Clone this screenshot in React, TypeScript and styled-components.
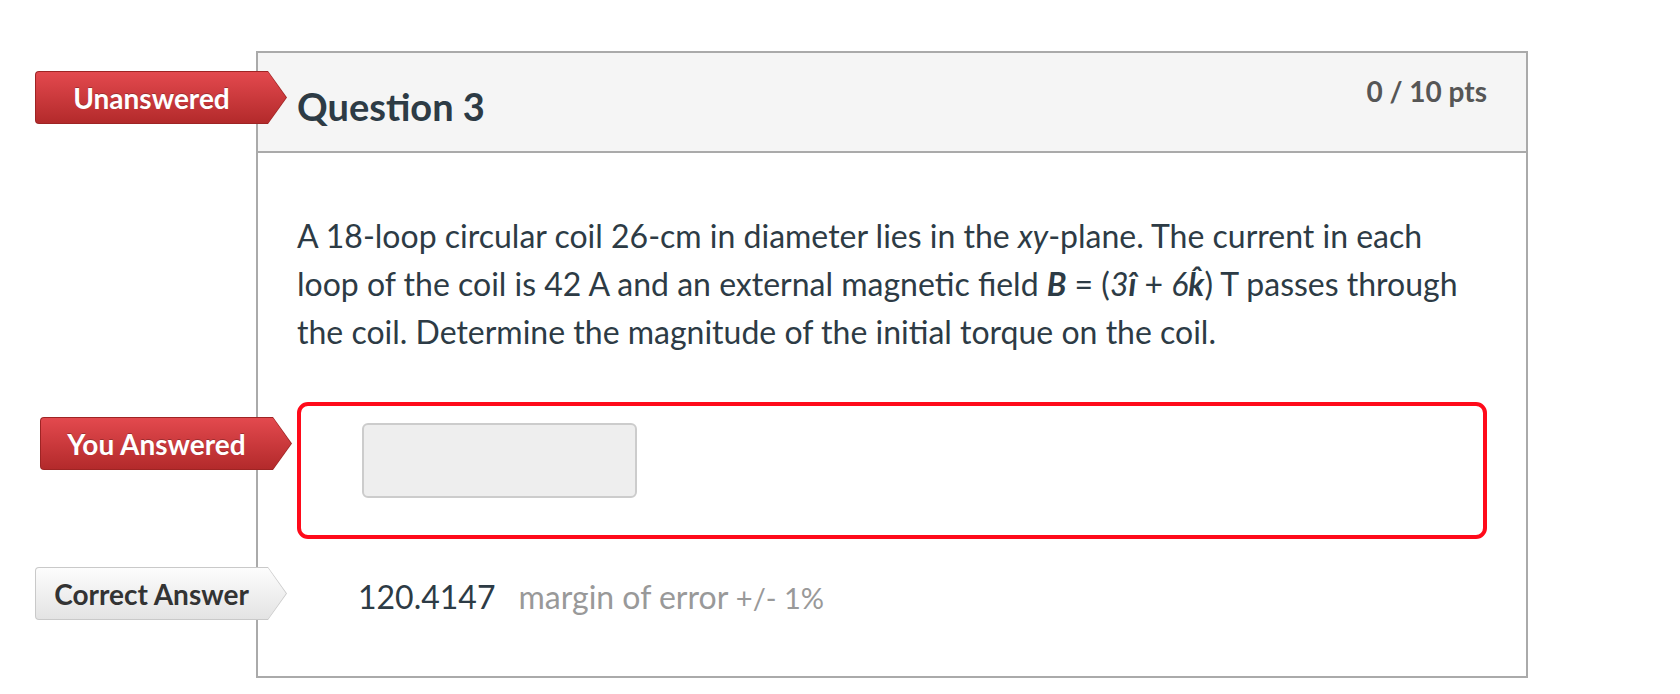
import React from 'react';
import styled, { createGlobalStyle, css } from 'styled-components';

const GlobalStyle = createGlobalStyle`
  html, body {
    margin: 0;
    padding: 0;
    background: #fff;
  }
  body {
    font-family: Lato, "Noto Sans", "Liberation Sans", sans-serif;
    color: #2d3b45;
  }
`;

const Page = styled.div`
  padding: 51px 0 0 256px;
  height: 694px;
  box-sizing: border-box;
`;

const Card = styled.section`
  width: 1272px;
  border: 2px solid #aaa;
  box-sizing: border-box;
  background: #fff;
`;

const Header = styled.header`
  position: relative;
  height: 98px;
  padding: 0 39px;
  background: #f5f5f5;
  border-bottom: 2px solid #aaa;
  display: flex;
  justify-content: space-between;
  align-items: flex-start;
`;

const QuestionName = styled.h2`
  margin: 31px 0 0;
  font-size: 38px;
  line-height: 1.2;
  font-weight: 700;
  color: #2d3b45;
`;

const Points = styled.div`
  margin-top: 22px;
  font-size: 28px;
  line-height: 1.2;
  font-weight: 700;
  color: #565656;
`;

const Body = styled.div`
  padding: 59px 39px 54px;
`;

const QuestionText = styled.p`
  margin: 0;
  font-size: 32px;
  line-height: 48px;
`;

const Vec = styled.b`
  font-style: italic;
  font-weight: 700;
`;

const AnswerBox = styled.div`
  position: relative;
  margin-top: 46px;
  height: 137px;
  box-sizing: border-box;
  padding: 17px 0 0 61px;
  border: 4px solid #ff0a1a;
  border-radius: 11px;
`;

const AnswerInput = styled.div`
  width: 275px;
  height: 75px;
  box-sizing: border-box;
  background: #eee;
  border: 2px solid #ccc;
  border-radius: 6px;
`;

const CorrectRow = styled.div`
  position: relative;
  margin-top: 34px;
  padding-left: 61px;
  font-size: 32px;
  line-height: 48px;
  display: flex;
  align-items: baseline;
`;

const Tolerance = styled.span`
  margin-left: 23px;
  color: #999;
`;

const Range = styled.span`
  font-size: 29px;
`;

const badgeShape = 'polygon(0 0, calc(100% - 19px) 0, 100% 50%, calc(100% - 19px) 100%, 0 100%)';

const Badge = styled.div<{ $tone: 'red' | 'light'; $left: number; $top: number }>`
  position: absolute;
  left: ${(p) => p.$left}px;
  top: ${(p) => p.$top}px;
  width: 252px;
  height: 53px;
  box-sizing: border-box;
  padding-right: 19px;
  display: flex;
  align-items: center;
  justify-content: center;
  font-size: 28px;
  font-weight: 700;
  border-radius: 4px 0 0 4px;
  clip-path: ${badgeShape};
  z-index: 1;

  &::before {
    content: '';
    position: absolute;
    inset: 1px;
    border-radius: 3px 0 0 3px;
    clip-path: polygon(0 0, calc(100% - 18px) 0, 100% 50%, calc(100% - 18px) 100%, 0 100%);
    z-index: -1;
  }

  ${(p) =>
    p.$tone === 'red'
      ? css`
          background: #9e2424;
          color: #fff;
          text-shadow: 0 -1px 0 rgba(0, 0, 0, 0.25);
          &::before {
            background: linear-gradient(#e3494e, #b32a2b);
          }
        `
      : css`
          background: #c9c9c9;
          color: #333;
          &::before {
            background: linear-gradient(#fdfdfd, #e3e3e3);
          }
        `}
`;

export default function App() {
  return (
    <>
      <GlobalStyle />
      <Page>
        <Card>
          <Header>
            <Badge $tone="red" $left={-223} $top={18}>
              Unanswered
            </Badge>
            <QuestionName>Question 3</QuestionName>
            <Points>0 / 10 pts</Points>
          </Header>
          <Body>
            <QuestionText>
              A 18-loop circular coil 26-cm in diameter lies in the <i>xy</i>-plane. The current in each
              loop of the coil is 42 A and an external magnetic field <Vec>B</Vec> = (<i>3</i>
              <Vec>î</Vec> + <i>6</i>
              <Vec>k̂</Vec>) T passes through the coil. Determine the magnitude of the initial torque
              on the coil.
            </QuestionText>
            <AnswerBox>
              <Badge $tone="red" $left={-261} $top={11}>
                You Answered
              </Badge>
              <AnswerInput />
            </AnswerBox>
            <CorrectRow>
              <Badge $tone="light" $left={-262} $top={-6}>
                Correct Answer
              </Badge>
              <span>120.4147</span>
              <Tolerance>
                margin of error <Range>+/- 1%</Range>
              </Tolerance>
            </CorrectRow>
          </Body>
        </Card>
      </Page>
    </>
  );
}
